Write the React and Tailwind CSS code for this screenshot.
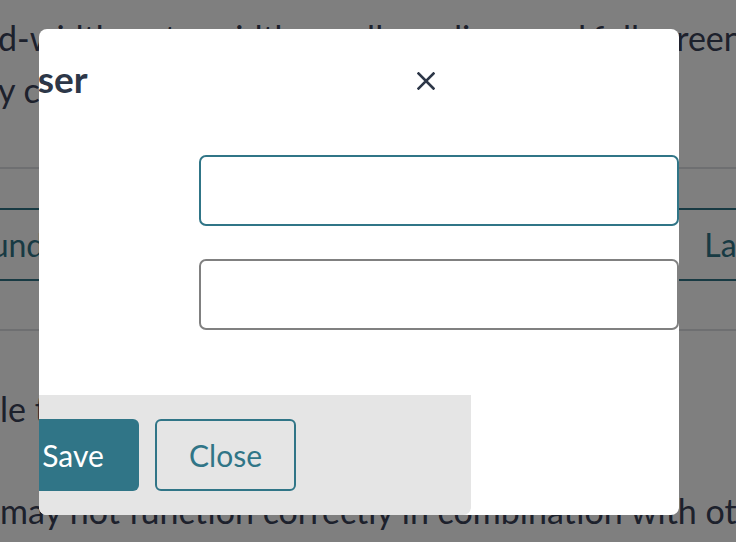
import React from "react";

export default function App() {
  return (
    <div className="relative w-[736px] h-[542px] overflow-hidden bg-white" style={{ fontFamily: "Lato, 'Noto Sans', sans-serif" }}>
      {/* page content behind the modal */}
      <div className="flex flex-col text-[34px] leading-[52px] text-[#3a4259]">
        <div className="pt-[12px] -ml-[2px]">
          <p className="whitespace-nowrap [word-spacing:-2.5px]">d-width, auto-width, small, medium, and full screen</p>
          <p className="whitespace-nowrap">y contain forms, tables and other content.</p>
        </div>
        <div className="mt-[51px] border-t-2 border-[#dcdfe3]">
          <div className="h-[39px]" />
          <div className="flex items-center h-[73px] border-y-2 border-[#307587] text-[32px] text-[#307587] whitespace-nowrap">
            <span className="-ml-[123px]">Background</span>
            <span className="ml-[660px]">Large</span>
          </div>
          <div className="h-[50px] border-b-2 border-[#dcdfe3]" />
        </div>
        <p className="mt-[52px] whitespace-nowrap">le to open it with the keyboard.</p>
        <p className="mt-[50px] whitespace-nowrap">may not function correctly in combination with other modals.</p>
      </div>

      {/* backdrop */}
      <div className="absolute inset-0 bg-black/50" />

      {/* modal */}
      <div className="absolute left-[39px] top-[29px] w-[640px] h-[486px] overflow-hidden rounded-[8px] bg-white">
        <div className="-ml-[32px] flex flex-col">
          <div className="flex w-[464px] items-start justify-between pt-[28px] pl-[4px] pr-[36px]">
            <h2 className="text-[37px] font-bold leading-[44px] text-[#2d3748]">User</h2>
            <button className="mt-[15px] text-[#2d3748]" aria-label="Close">
              <svg width="18" height="18" viewBox="0 0 18 18" fill="none" stroke="currentColor" strokeWidth="2.6" strokeLinecap="square">
                <path d="M1.5 1.5 L16.5 16.5 M16.5 1.5 L1.5 16.5" />
              </svg>
            </button>
          </div>
          <div className="flex flex-col gap-[33px] pt-[54px] pl-[192px]">
            <input className="h-[71px] w-[480px] rounded-[7px] border-2 border-[#307587] bg-white outline-none" />
            <input className="h-[71px] w-[480px] rounded-[7px] border-2 border-[#808080] bg-white outline-none" />
          </div>
          <div className="mt-[65px] flex w-[464px] gap-[16px] rounded-br-[8px] bg-[#e5e5e5] py-[24px]">
            <button className="h-[72px] w-[132px] rounded-[6px] bg-[#307587] text-[30px] text-white">Save</button>
            <button className="h-[72px] w-[141px] rounded-[6px] border-2 border-[#307587] text-[30px] text-[#307587]">Close</button>
          </div>
        </div>
      </div>
    </div>
  );
}
